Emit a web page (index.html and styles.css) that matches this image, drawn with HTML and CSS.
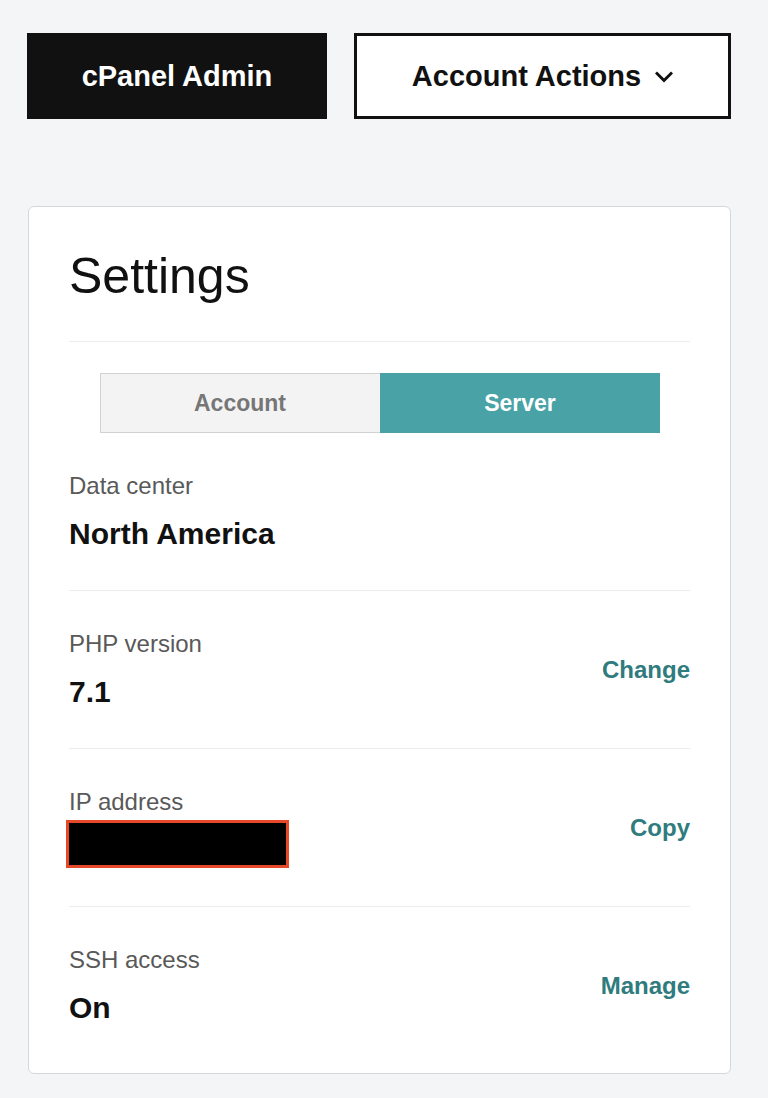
FILE: index.html
```html
<!DOCTYPE html>
<html lang="en">
<head>
    <meta charset="UTF-8">
    <meta name="viewport" content="width=device-width, initial-scale=1.0">
    <title>Server Settings</title>
    <link rel="stylesheet" href="styles.css">
</head>
<body>

<div class="page">
    <div class="actions">
        <a class="btn btn-dark" href="#">cPanel Admin</a>
        <button class="btn btn-outline" type="button">
            Account Actions
            <svg class="chevron" width="18" height="12" viewBox="0 0 18 12" aria-hidden="true">
                <path d="M2 2.5l7 7 7-7" fill="none" stroke="#111" stroke-width="3" stroke-linecap="square"/>
            </svg>
        </button>
    </div>

    <section class="card">
        <div class="card-head">
            <h1 class="card-title">Settings</h1>
        </div>

        <div class="tabs">
            <div class="tab">Account</div>
            <div class="tab active">Server</div>
        </div>

        <div class="row">
            <div class="row-info">
                <p class="row-label">Data center</p>
                <p class="row-value">North America</p>
            </div>
        </div>

        <div class="row">
            <div class="row-info">
                <p class="row-label">PHP version</p>
                <p class="row-value">7.1</p>
            </div>
            <a class="row-link" href="#">Change</a>
        </div>

        <div class="row">
            <div class="row-info">
                <p class="row-label">IP address</p>
                <span class="redacted"></span>
            </div>
            <a class="row-link" href="#">Copy</a>
        </div>

        <div class="row">
            <div class="row-info">
                <p class="row-label">SSH access</p>
                <p class="row-value">On</p>
            </div>
            <a class="row-link" href="#">Manage</a>
        </div>
    </section>
</div>

</body>
</html>
```

FILE: styles.css
```css
:root {
    --page-bg: #f4f5f7;
    --ink: #111111;
    --muted: #595959;
    --teal: #49a2a6;
    --link: #2f7b7e;
    --line: #ececec;
}

* {
    margin: 0;
    padding: 0;
    box-sizing: border-box;
}

body {
    font-family: "Liberation Sans", Arial, sans-serif;
    background: var(--page-bg);
    color: var(--ink);
}

.page {
    width: 704px;
    margin-left: 27px;
    padding-top: 33px;
}

/* top buttons */
.actions {
    display: grid;
    grid-template-columns: 300px 1fr;
    gap: 27px;
}

.btn {
    height: 86px;
    display: flex;
    align-items: center;
    justify-content: center;
    font-family: inherit;
    font-size: 29px;
    font-weight: 700;
    text-decoration: none;
    cursor: pointer;
}

.btn-dark {
    background: var(--ink);
    color: #fff;
}

.btn-outline {
    background: #fff;
    color: var(--ink);
    border: 3px solid var(--ink);
    gap: 14px;
}

.chevron {
    display: block;
    margin-top: 2px;
}

/* settings card */
.card {
    margin: 87px 0 0 1px;
    width: 703px;
    background: #fff;
    border: 1px solid #d5d7da;
    border-radius: 6px;
    padding: 39px 40px 9px;
}

.card-head {
    padding-bottom: 35px;
    border-bottom: 1px solid var(--line);
}

.card-title {
    font-size: 50px;
    font-weight: 400;
    line-height: 60px;
    color: var(--ink);
}

.tabs {
    display: grid;
    grid-template-columns: 1fr 1fr;
    width: 560px;
    height: 60px;
    margin: 31px auto 0;
}

.tab {
    display: flex;
    align-items: center;
    justify-content: center;
    font-size: 23px;
    font-weight: 700;
    background: #f3f3f3;
    color: #767676;
    border: 1px solid #d2d2d2;
    border-right: none;
}

.tab.active {
    background: var(--teal);
    color: #fff;
    border-color: var(--teal);
}

/* info rows */
.row {
    display: flex;
    align-items: center;
    justify-content: space-between;
    padding: 38px 0;
}

.row + .row {
    border-top: 1px solid var(--line);
}

.row-label {
    font-size: 24px;
    line-height: 30px;
    color: var(--muted);
}

.row-value {
    font-size: 30px;
    font-weight: 700;
    line-height: 36px;
    margin-top: 15px;
}

.redacted {
    display: block;
    width: 223px;
    height: 48px;
    margin: 3px 0 0 -3px;
    background: #000;
    border: 3px solid #e8482a;
}

.row-link {
    font-size: 24px;
    font-weight: 700;
    color: var(--link);
    text-decoration: none;
}
```
